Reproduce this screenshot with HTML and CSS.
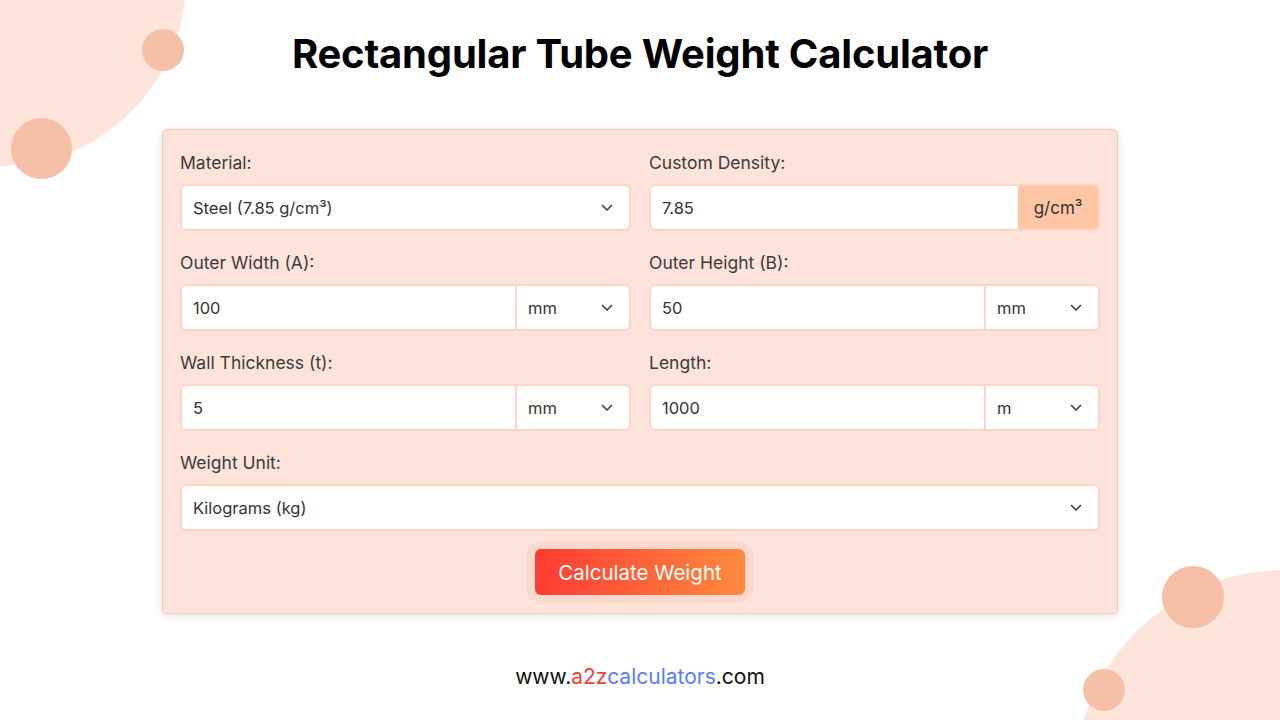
FILE: index.html
```html
<!DOCTYPE html>
<html>
<head>
  <title>Rectangular Tube Weight Calculator</title>
  <meta name="viewport" content="width=device-width, initial-scale=1.0">
  <link rel="stylesheet" href="styles.css">
</head>
<body>

  <div class="page">
    <div class="blob blob-top"></div>
    <div class="dot dot-a"></div>
    <div class="dot dot-b"></div>
    <div class="blob blob-bottom"></div>
    <div class="dot dot-c"></div>
    <div class="dot dot-d"></div>

    <h1 class="title">Rectangular Tube Weight Calculator</h1>

    <div class="card">
      <div class="grid">
        <div class="field">
          <label>Material:</label>
          <div class="box select">
            <span>Steel (7.85 g/cm³)</span>
            <svg class="chev" viewBox="0 0 12 8"><path d="M1.5 1.5 6 6l4.5-4.5"/></svg>
          </div>
        </div>
        <div class="field">
          <label>Custom Density:</label>
          <div class="box group">
            <span class="value">7.85</span>
            <span class="addon">g/cm³</span>
          </div>
        </div>

        <div class="field">
          <label>Outer Width (A):</label>
          <div class="box group">
            <span class="value">100</span>
            <span class="unit">mm <svg class="chev" viewBox="0 0 12 8"><path d="M1.5 1.5 6 6l4.5-4.5"/></svg></span>
          </div>
        </div>
        <div class="field">
          <label>Outer Height (B):</label>
          <div class="box group">
            <span class="value">50</span>
            <span class="unit">mm <svg class="chev" viewBox="0 0 12 8"><path d="M1.5 1.5 6 6l4.5-4.5"/></svg></span>
          </div>
        </div>

        <div class="field">
          <label>Wall Thickness (t):</label>
          <div class="box group">
            <span class="value">5</span>
            <span class="unit">mm <svg class="chev" viewBox="0 0 12 8"><path d="M1.5 1.5 6 6l4.5-4.5"/></svg></span>
          </div>
        </div>
        <div class="field">
          <label>Length:</label>
          <div class="box group">
            <span class="value">1000</span>
            <span class="unit">m <svg class="chev" viewBox="0 0 12 8"><path d="M1.5 1.5 6 6l4.5-4.5"/></svg></span>
          </div>
        </div>

        <div class="field wide">
          <label>Weight Unit:</label>
          <div class="box select">
            <span>Kilograms (kg)</span>
            <svg class="chev" viewBox="0 0 12 8"><path d="M1.5 1.5 6 6l4.5-4.5"/></svg>
          </div>
        </div>
      </div>

      <div class="actions">
        <button class="calc">Calculate Weight</button>
      </div>
    </div>

    <div class="footer">www.<span class="red">a2z</span><span class="blue">calculators</span>.com</div>
  </div>

</body>
</html>
```

FILE: styles.css
```css
* {
  margin: 0;
  padding: 0;
  box-sizing: border-box;
}

html, body {
  height: 100%;
  background: #fff;
  font-family: Inter, "Noto Sans", sans-serif;
}

.page {
  position: relative;
  width: 1280px;
  height: 720px;
  overflow: hidden;
  display: flex;
  flex-direction: column;
  align-items: center;
}

/* background decoration */
.blob, .dot {
  position: absolute;
  border-radius: 50%;
}

.blob {
  background: #fee5db;
}

.blob-top {
  width: 372px;
  height: 372px;
  left: -186px;
  top: -206px;
}

.blob-bottom {
  width: 420px;
  height: 420px;
  left: 1075px;
  top: 570px;
}

.dot {
  background: #f5c0a5;
}

.dot-a { width: 42px; height: 42px; left: 142px; top: 29px; }
.dot-b { width: 61px; height: 61px; left: 11px; top: 118px; }
.dot-c { width: 62px; height: 62px; left: 1162px; top: 566px; }
.dot-d { width: 42px; height: 42px; left: 1083px; top: 669px; }

.title {
  position: relative;
  margin-top: 30px;
  font-size: 40px;
  line-height: 48px;
  font-weight: 700;
  color: #000;
  letter-spacing: -0.2px;
}

.card {
  position: relative;
  margin-top: 51px;
  width: 956px;
  background: #fee3da;
  border: 1.5px solid #fcc8b6;
  border-radius: 6px;
  box-shadow: 0 2px 8px rgba(0, 0, 0, 0.12);
  padding: 22px 17px 10px 17px;
}

.grid {
  display: grid;
  grid-template-columns: 1fr 1fr;
  column-gap: 18px;
  row-gap: 21px;
}

.field.wide {
  grid-column: 1 / 3;
}

.field label {
  display: block;
  font-size: 17.5px;
  line-height: 22px;
  color: #3b3b3b;
  margin-bottom: 10px;
}

.box {
  height: 47px;
  background: #fff;
  border: 2px solid #fdd5c6;
  border-radius: 6px;
  display: flex;
  align-items: center;
  font-size: 16.5px;
  color: #333;
  overflow: hidden;
}

.select {
  justify-content: space-between;
  padding: 0 16px 0 11px;
}

.group .value {
  flex: 1;
  padding-left: 11px;
}

.group .unit {
  width: 114px;
  height: 100%;
  border-left: 2px solid #fdd5c6;
  display: flex;
  align-items: center;
  justify-content: space-between;
  padding: 0 16px 0 11px;
}

.group .addon {
  width: 80px;
  height: 100%;
  background: #ffc6a6;
  display: flex;
  align-items: center;
  justify-content: center;
  font-size: 17px;
  color: #333;
}

.chev {
  width: 12px;
  height: 8px;
  fill: none;
  stroke: #444;
  stroke-width: 1.7;
  stroke-linecap: round;
  stroke-linejoin: round;
}

.actions {
  display: flex;
  justify-content: center;
  margin-top: 10px;
}

.calc {
  margin: 8px;
  width: 210px;
  height: 46px;
  border: none;
  border-radius: 6px;
  background: linear-gradient(90deg, #ff3a32, #ff8a3e);
  color: #fff;
  font-family: Inter, "Noto Sans", sans-serif;
  font-size: 20.5px;
  box-shadow: 0 0 0 8px #fdd8cc;
  cursor: pointer;
}

.footer {
  position: relative;
  margin-top: 50px;
  font-size: 21px;
  color: #111;
}

.footer .red {
  color: #f2403a;
}

.footer .blue {
  color: #5b7cf6;
}
```
